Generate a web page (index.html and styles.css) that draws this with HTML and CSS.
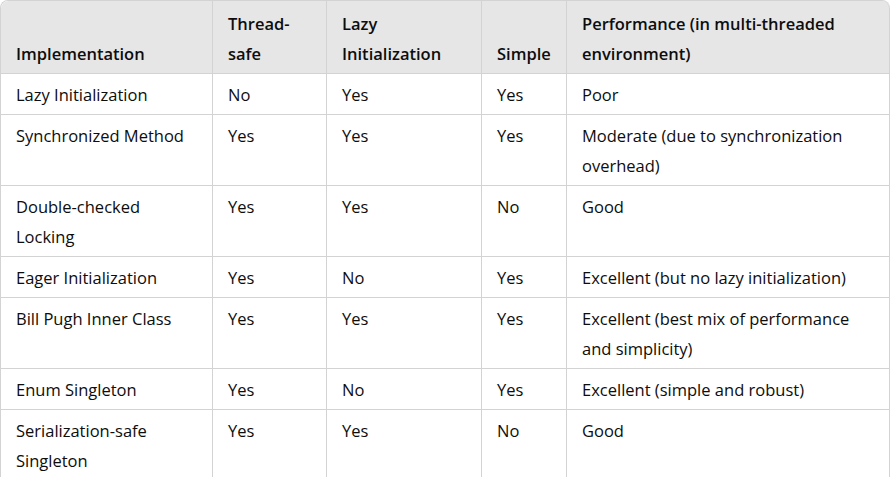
FILE: index.html
```html
<!DOCTYPE html>
<html>
<head>
<meta charset="utf-8">
<link rel="stylesheet" href="styles.css">
</head>
<body>
<div class="wrap">
<table class="grid">
<colgroup>
<col class="c1"><col class="c2"><col class="c3"><col class="c4"><col class="c5">
</colgroup>
<thead>
<tr><th>Implementation</th><th>Thread-safe</th><th>Lazy Initialization</th><th>Simple</th><th>Performance (in multi-threaded environment)</th></tr>
</thead>
<tbody>
<tr><td>Lazy Initialization</td><td>No</td><td>Yes</td><td>Yes</td><td>Poor</td></tr>
<tr><td>Synchronized Method</td><td>Yes</td><td>Yes</td><td>Yes</td><td>Moderate (due to synchronization overhead)</td></tr>
<tr><td>Double-checked Locking</td><td>Yes</td><td>Yes</td><td>No</td><td>Good</td></tr>
<tr><td>Eager Initialization</td><td>Yes</td><td>No</td><td>Yes</td><td>Excellent (but no lazy initialization)</td></tr>
<tr><td>Bill Pugh Inner Class</td><td>Yes</td><td>Yes</td><td>Yes</td><td>Excellent (best mix of performance and simplicity)</td></tr>
<tr><td>Enum Singleton</td><td>Yes</td><td>No</td><td>Yes</td><td>Excellent (simple and robust)</td></tr>
<tr><td>Serialization-safe Singleton</td><td>Yes</td><td>Yes</td><td>No</td><td>Good</td></tr>
</tbody>
</table>
</div>
</body>
</html>
```
FILE: styles.css
```css
html, body {
  margin: 0;
  padding: 0;
  background: #ffffff;
}
.wrap {
  width: 889px;
}
.grid {
  width: 889px;
  table-layout: fixed;
  border-collapse: separate;
  border-spacing: 0;
  font-family: "Open Sans", "Noto Sans", sans-serif;
  font-size: 16.5px;
  line-height: 30px;
  color: #0d0d0d;
  border-top: 1px solid #d3d3d3;
  border-left: 1px solid #d3d3d3;
  border-radius: 8px 8px 0 0;
}
.c1 { width: 212px; }
.c2 { width: 114px; }
.c3 { width: 155px; }
.c4 { width: 85px; }
.c5 { width: 323px; }
.grid th, .grid td {
  border-right: 1px solid #d3d3d3;
  border-bottom: 1px solid #d3d3d3;
  text-align: left;
  padding: 6px 15px 4px 15px;
  vertical-align: top;
}
.grid th {
  background: #e6e6e6;
  font-weight: 600;
  vertical-align: bottom;
  padding: 8px 15px 4px 15px;
}
.grid thead th:first-child { border-top-left-radius: 8px; }
.grid thead th:last-child { border-top-right-radius: 8px; }
```
